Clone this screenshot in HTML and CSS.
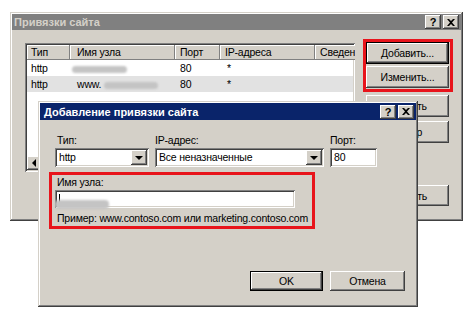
FILE: index.html
```html
<!DOCTYPE html>
<html lang="ru">
<head>
    <meta charset="UTF-8">
    <meta name="viewport" content="width=device-width, initial-scale=1.0">
    <title>Привязки сайта</title>
    <link rel="stylesheet" href="styles.css">
</head>
<body>
    <div class="desk">
        <!-- окно привязок (неактивное) -->
        <div class="win outer">
            <div class="title inactive">
                <span>Привязки сайта</span>
                <div class="tbtns">
                    <b class="tb">?</b>
                    <b class="tb"><svg width="8" height="7" viewBox="0 0 8 7"><path d="M0 0h2l2 2 2-2h2L5 3.5 8 7H6L4 5 2 7H0l3-3.5z" fill="#000"/></svg></b>
                </div>
            </div>
            <div class="obody">
                <div class="list">
                    <div class="lhead">
                        <span>Тип</span><span>Имя узла</span><span>Порт</span><span>IP-адреса</span><span>Сведения о привязке</span>
                    </div>
                    <div class="row">
                        <span>http</span><span><i class="blur first"></i></span><span>80</span><span>*</span><span></span>
                    </div>
                    <div class="row sel">
                        <span>http</span><span>www.<i class="blur"></i></span><span>80</span><span>*</span><span></span>
                    </div>
                    <div class="hscroll">
                        <b class="arrow"></b>
                        <div class="track"></div>
                    </div>
                </div>
                <div class="side">
                    <div class="mark">
                        <button class="btn def">Добавить...</button>
                        <button class="btn">Изменить...</button>
                    </div>
                    <button class="btn">Удалить</button>
                    <button class="btn">Обзор</button>
                    <button class="btn close">Закрыть</button>
                </div>
            </div>
        </div>

        <!-- диалог добавления -->
        <div class="win dialog">
            <div class="title">
                <span>Добавление привязки сайта</span>
                <div class="tbtns">
                    <b class="tb">?</b>
                    <b class="tb"><svg width="8" height="7" viewBox="0 0 8 7"><path d="M0 0h2l2 2 2-2h2L5 3.5 8 7H6L4 5 2 7H0l3-3.5z" fill="#000"/></svg></b>
                </div>
            </div>
            <div class="dbody">
                <div class="fields">
                    <div class="field">
                        <label>Тип:</label>
                        <div class="combo"><span>http</span><b class="drop"></b></div>
                    </div>
                    <div class="field">
                        <label class="flush">IP-адрес:</label>
                        <div class="combo"><span>Все неназначенные</span><b class="drop"></b></div>
                    </div>
                    <div class="field">
                        <label class="flush">Порт:</label>
                        <div class="edit"><span>80</span></div>
                    </div>
                </div>
                <div class="host">
                    <label>Имя узла:</label>
                    <div class="edit wide"><i class="caret"></i><i class="blur inbox"></i></div>
                    <p class="hint">Пример: www.contoso.com или marketing.contoso.com</p>
                </div>
                <div class="actions">
                    <button class="btn def ok">OK</button>
                    <button class="btn cancel">Отмена</button>
                </div>
            </div>
        </div>
    </div>
</body>
</html>
```

FILE: styles.css
```css
* {
    box-sizing: border-box;
    margin: 0;
    padding: 0;
}
body {
    background: #fff;
    font: 10.5px "Liberation Sans", Arial, sans-serif;
    letter-spacing: -0.2px;
    color: #000;
}
.desk {
    position: relative;
    width: 474px;
    height: 316px;
    overflow: hidden;
}

/* окна */
.win {
    position: absolute;
    display: flex;
    flex-direction: column;
    padding: 2px;
    background: #d4d0c8;
    box-shadow: inset -1px -1px #404040, inset 1px 1px #d4d0c8, inset -2px -2px #808080, inset 2px 2px #fff;
}
.outer {
    left: 10px;
    top: 12px;
    width: 453px;
    height: 209px;
}
.dialog {
    left: 38px;
    top: 101px;
    width: 380px;
    height: 206px;
}
.title {
    display: flex;
    align-items: center;
    justify-content: space-between;
    height: 17px;
    padding: 0 2px 0 4px;
    background: #0a246a;
    color: #fff;
    font-size: 11px;
    font-weight: bold;
    letter-spacing: 0;
}
.title.inactive {
    height: 16px;
    padding-left: 2px;
    background: #808080;
    color: #d4d0c8;
}
.tbtns {
    display: flex;
    gap: 2px;
}
.tb {
    display: flex;
    align-items: center;
    justify-content: center;
    width: 16px;
    height: 14px;
    background: #d4d0c8;
    color: #000;
    box-shadow: inset -1px -1px #404040, inset 1px 1px #fff, inset -2px -2px #808080;
}

/* кнопки */
.btn {
    height: 22px;
    border: 0;
    background: #d4d0c8;
    font: inherit;
    letter-spacing: inherit;
    color: #000;
    white-space: nowrap;
    box-shadow: inset -1px -1px #404040, inset 1px 1px #fff, inset -2px -2px #808080;
}
.btn.def {
    box-shadow: inset 0 0 0 1px #000, inset -2px -2px #404040, inset 2px 2px #fff, inset -3px -3px #808080;
}

/* основное окно */
.obody {
    flex: 1;
    display: flex;
    gap: 11px;
    padding: 13px 0 13px 13px;
}
.list {
    align-self: flex-start;
    display: flex;
    flex-direction: column;
    width: 330px;
    height: 129px;
    padding: 2px;
    overflow: hidden;
    background: #fff;
    box-shadow: inset 1px 1px #808080, inset -1px -1px #fff, inset 2px 2px #404040, inset -2px -2px #d4d0c8;
}
.lhead, .row {
    display: grid;
    grid-template-columns: 43px 105px 45px 95px 140px;
    white-space: nowrap;
}
.lhead span {
    height: 15px;
    line-height: 14px;
    padding-left: 5px;
    overflow: hidden;
    background: #d4d0c8;
    box-shadow: inset -1px -1px #808080, inset 1px 1px #fff;
}
.row {
    height: 16px;
    line-height: 16px;
}
.row span {
    padding-left: 5px;
}
.row span:nth-child(4) {
    padding-left: 7px;
}
.lhead span:first-child, .row span:first-child {
    padding-left: 4px;
}
.lhead span:nth-child(2), .row span:nth-child(2) {
    padding-left: 7px;
}
.row.sel {
    background: #e2e2e2;
}
.blur {
    display: inline-block;
    width: 54px;
    height: 7px;
    margin-left: 3px;
    vertical-align: -1px;
    border-radius: 4px;
    background: #c4c4c4;
    filter: blur(1px);
}
.blur.first {
    margin-left: -5px;
    width: 55px;
}
.hscroll {
    display: flex;
    height: 14px;
    margin-top: auto;
}
.arrow {
    display: flex;
    align-items: center;
    justify-content: center;
    width: 14px;
    background: #d4d0c8;
    box-shadow: inset -1px -1px #404040, inset 1px 1px #fff, inset -2px -2px #808080;
}
.arrow::after {
    content: "";
    border-top: 4px solid transparent;
    border-bottom: 4px solid transparent;
    border-right: 4px solid #000;
}
.track {
    flex: 1;
    background: #ece9e2;
}
.side {
    display: flex;
    flex-direction: column;
    width: 83px;
}
.mark {
    display: flex;
    flex-direction: column;
    gap: 2px;
    margin: -4px -4px 3px -3px;
    padding: 0 1px 1px 0;
    border: 3px solid #e8141b;
}
.side > .btn + .btn {
    margin-top: 4px;
}
.side > .btn.close {
    margin-top: auto;
    height: 21px;
}

/* диалог */
.dbody {
    flex: 1;
    display: flex;
    flex-direction: column;
    padding: 14px 11px 14px 15px;
}
.fields {
    display: grid;
    grid-template-columns: 94px 169px 47px;
    column-gap: 6px;
}
.field label {
    display: block;
    line-height: 13px;
    margin-bottom: 1px;
    padding-left: 2px;
}
.field label.flush {
    padding-left: 0;
}
.combo, .edit {
    display: flex;
    height: 19px;
    padding: 2px;
    background: #fff;
    box-shadow: inset 1px 1px #808080, inset -1px -1px #fff, inset 2px 2px #404040, inset -2px -2px #d4d0c8;
}
.combo span, .edit span {
    flex: 1;
    padding-left: 2px;
    line-height: 15px;
    white-space: nowrap;
    overflow: hidden;
}
.drop {
    display: flex;
    align-items: center;
    justify-content: center;
    width: 16px;
    background: #d4d0c8;
    box-shadow: inset -1px -1px #404040, inset 1px 1px #fff, inset -2px -2px #808080;
}
.drop::after {
    content: "";
    border-left: 4px solid transparent;
    border-right: 4px solid transparent;
    border-top: 4px solid #000;
}
.host {
    width: 266px;
    margin: 5px 0 0 -6px;
    padding: 1px 0 1px 3px;
    border: 3px solid #e8141b;
}
.host label {
    display: block;
    line-height: 13px;
    margin-bottom: 1px;
    padding-left: 2px;
}
.edit.wide {
    position: relative;
    width: 240px;
    height: 18px;
}
.caret {
    width: 1px;
    height: 9px;
    margin: 2px 0 0 2px;
    background: #000;
}
.blur.inbox {
    position: absolute;
    left: 0;
    top: 10px;
    width: 54px;
    height: 9px;
    margin: 0;
}
.hint {
    margin-top: 4px;
    line-height: 13px;
    padding-left: 2px;
    white-space: nowrap;
}
.actions {
    display: flex;
    justify-content: flex-end;
    gap: 7px;
    margin-top: auto;
}
.actions .btn {
    height: 20px;
}
.ok {
    width: 73px;
}
.cancel {
    width: 75px;
}
```
